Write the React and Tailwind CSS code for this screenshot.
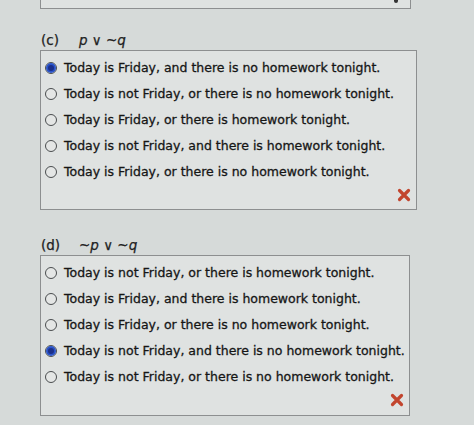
import React from "react";

const Radio = ({ checked }) => (
  <span className="flex h-[12px] w-[12px] shrink-0 items-center justify-center rounded-full border-[1.5px] border-[#4a4d4f] bg-[#e4e6e5]">
    {checked && <span className="h-[10px] w-[10px] rounded-full border-2 border-[#2c55c9] bg-[#1b2f8a]" />}
  </span>
);

const Cross = () => (
  <svg width="14" height="14" viewBox="0 0 14 14">
    <path d="M2.5 2.5 L11.5 11.5 M11.5 2.5 L2.5 11.5" stroke="#c2452e" strokeWidth="3.2" strokeLinecap="round" />
  </svg>
);

const Question = ({ label, formula, options, checked, width, mt, pb }) => (
  <div className={mt}>
    <div className="flex h-[20px] items-center text-[13.5px] text-[#222] [-webkit-text-stroke:0.25px_#222]">
      <span className="w-[39px] pl-[1px]">({label})</span>
      <span className="italic">{formula}</span>
    </div>
    <div className={`${width} ${pb} border border-[#8d8f90] bg-[#dfe2e1] pt-[4px]`}>
      {options.map((o, i) => (
        <div key={i} className="flex h-[26px] items-center gap-[7px] pl-[4px]">
          <Radio checked={i === checked} />
          <span className="text-[12.5px] text-[#161616] [-webkit-text-stroke:0.3px_#161616]">{o}</span>
        </div>
      ))}
      <div className="flex h-[20px] items-center justify-end pr-[5px]">
        <Cross />
      </div>
    </div>
  </div>
);

export default function App() {
  return (
    <div
      className="h-[425px] w-[474px] overflow-hidden bg-[#d6dad9] pl-[40px]"
      style={{ fontFamily: '"DejaVu Sans", Verdana, sans-serif' }}
    >
      <div className="relative h-[9px] w-[371px] border-x border-b border-[#8d8f90] bg-[#dfe2e1]">
        <span className="absolute right-[12px] top-0 h-[3px] w-[4px] rounded-b bg-[#333]" />
      </div>
      <Question
        mt="mt-[21px]"
        label="c"
        formula="p ∨ ~q"
        checked={0}
        width="w-[377px]"
        pb="pb-[4px]"
        options={[
          "Today is Friday, and there is no homework tonight.",
          "Today is not Friday, or there is no homework tonight.",
          "Today is Friday, or there is homework tonight.",
          "Today is not Friday, and there is homework tonight.",
          "Today is Friday, or there is no homework tonight.",
        ]}
      />
      <Question
        mt="mt-[25px]"
        label="d"
        formula="~p ∨ ~q"
        checked={3}
        width="w-[370px]"
        pb="pb-[5px]"
        options={[
          "Today is not Friday, or there is homework tonight.",
          "Today is Friday, and there is homework tonight.",
          "Today is Friday, or there is no homework tonight.",
          "Today is not Friday, and there is no homework tonight.",
          "Today is not Friday, or there is no homework tonight.",
        ]}
      />
    </div>
  );
}
